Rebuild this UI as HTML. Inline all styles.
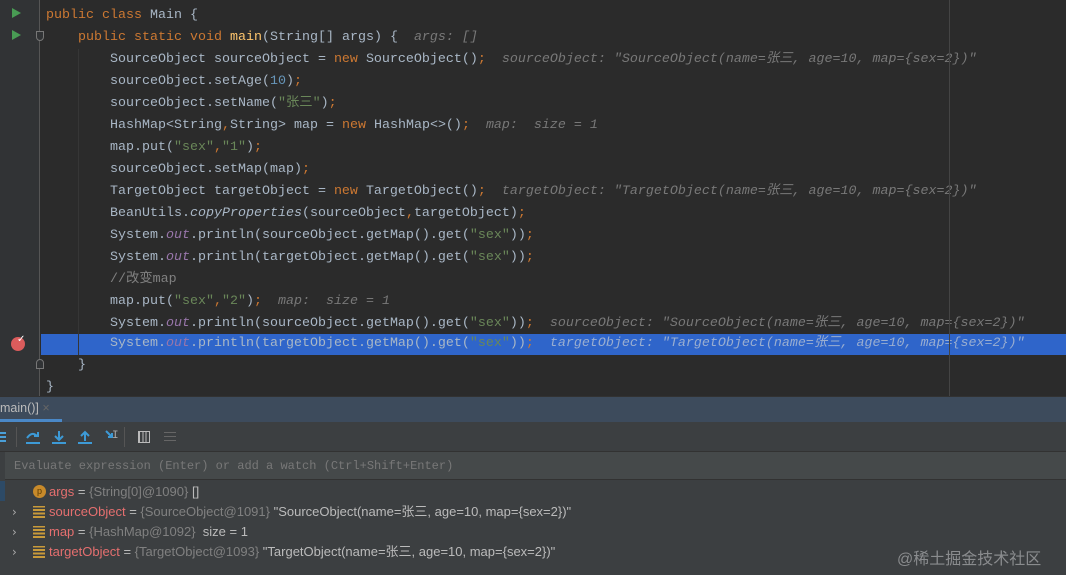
<!DOCTYPE html>
<html><head><meta charset="utf-8"><style>
*{margin:0;padding:0;box-sizing:border-box}
body{width:1066px;height:575px;overflow:hidden;background:#3c3f41;position:relative;font-family:"Liberation Mono","Noto Sans CJK SC",monospace}
#ed{position:absolute;left:0;top:0;width:1066px;height:396px;background:#2b2b2b}
#gut{position:absolute;left:0;top:0;width:40px;height:396px;background:#313335;border-right:1px solid #555}
.l{position:absolute;left:46px;height:22px;line-height:22px;font-size:13.33px;color:#a9b7c6;white-space:pre;margin-top:2px}
.k{color:#cc7832}.s{color:#6a8759}.n{color:#6897bb}.f{color:#9876aa;font-style:italic}.m{color:#ffc66d}.i{font-style:italic}
.h{color:#787878;font-style:italic}
#hl{position:absolute;left:41px;top:334px;width:1025px;height:21px;background:#2f65ca}
.guide{position:absolute;width:1px;background:#363636}
.tri{position:absolute;left:12px;width:0;height:0;border-left:9px solid #499c54;border-top:5.5px solid transparent;border-bottom:5.5px solid transparent}
#tabs{position:absolute;left:0;top:396px;width:1066px;height:26px;background:#3d4b5c;border-top:1px solid #323232}
#tb{position:absolute;left:0;top:422px;width:1066px;height:30px;background:#3c3f41;border-bottom:1px solid #323232}
#ev{position:absolute;left:5px;top:452px;width:1061px;height:28px;background:#45494a;border-bottom:1px solid #323232;font-size:12px;color:#787878;line-height:28px;padding-left:9px}
.v{position:absolute;left:0;height:20px;line-height:20px;font-family:"Liberation Sans","Noto Sans CJK SC",sans-serif;font-size:13px;color:#bbbbbb;white-space:pre}
.v .nm{color:#e56f6f}.v .g{color:#808080}
.ic{position:absolute;left:33px;top:4px;width:12px;height:12px}
.arr{position:absolute;left:12px;top:0;color:#aaa;font-size:12px;font-family:"DejaVu Sans",sans-serif}
</style></head><body>
<div id="ed">
<div id="gut"></div>
<div id="hl"></div>
<div class="guide" style="left:78px;top:49px;height:306px"></div>
<div class="tri" style="top:8px"></div>
<div class="tri" style="top:30px"></div>
<div style="position:absolute;left:36px;top:31px;width:8px;height:10px;border:1px solid #777;border-radius:0 0 4px 4px;background:#313335"></div>
<div style="position:absolute;left:36px;top:359px;width:8px;height:10px;border:1px solid #777;border-radius:4px 4px 0 0;background:#313335"></div>
<div style="position:absolute;left:11px;top:337px;width:14px;height:14px;border-radius:50%;background:#db5c5c"></div>
<div style="position:absolute;left:17px;top:335px;color:#fff;font-size:10px;line-height:10px;font-family:'DejaVu Sans'">✓</div>
<div class="l" style="top:3px"><span class="k">public class </span>Main {</div>
<div class="l" style="top:25px">    <span class="k">public static void </span><span class="m">main</span>(String[] args) {  <span class="h">args: []</span></div>
<div class="l" style="top:47px">        SourceObject sourceObject = <span class="k">new </span>SourceObject()<span class="k">;</span>  <span class="h">sourceObject: "SourceObject(name=张三, age=10, map={sex=2})"</span></div>
<div class="l" style="top:69px">        sourceObject.setAge(<span class="n">10</span>)<span class="k">;</span></div>
<div class="l" style="top:91px">        sourceObject.setName(<span class="s">"张三"</span>)<span class="k">;</span></div>
<div class="l" style="top:113px">        HashMap&lt;String<span class="k">,</span>String&gt; map = <span class="k">new </span>HashMap&lt;&gt;()<span class="k">;</span>  <span class="h">map:  size = 1</span></div>
<div class="l" style="top:135px">        map.put(<span class="s">"sex"</span><span class="k">,</span><span class="s">"1"</span>)<span class="k">;</span></div>
<div class="l" style="top:157px">        sourceObject.setMap(map)<span class="k">;</span></div>
<div class="l" style="top:179px">        TargetObject targetObject = <span class="k">new </span>TargetObject()<span class="k">;</span>  <span class="h">targetObject: "TargetObject(name=张三, age=10, map={sex=2})"</span></div>
<div class="l" style="top:201px">        BeanUtils.<span class="i">copyProperties</span>(sourceObject<span class="k">,</span>targetObject)<span class="k">;</span></div>
<div class="l" style="top:223px">        System.<span class="f">out</span>.println(sourceObject.getMap().get(<span class="s">"sex"</span>))<span class="k">;</span></div>
<div class="l" style="top:245px">        System.<span class="f">out</span>.println(targetObject.getMap().get(<span class="s">"sex"</span>))<span class="k">;</span></div>
<div class="l" style="top:267px">        <span style="color:#808080">//改变map</span></div>
<div class="l" style="top:289px">        map.put(<span class="s">"sex"</span><span class="k">,</span><span class="s">"2"</span>)<span class="k">;</span>  <span class="h">map:  size = 1</span></div>
<div class="l" style="top:311px">        System.<span class="f">out</span>.println(sourceObject.getMap().get(<span class="s">"sex"</span>))<span class="k">;</span>  <span class="h">sourceObject: "SourceObject(name=张三, age=10, map={sex=2})"</span></div>
<div class="l" style="top:331px">        System.<span class="f">out</span>.println(targetObject.getMap().get(<span class="s">"sex"</span>))<span class="k">;</span>  <span class="h" style="color:#9aaed0">targetObject: "TargetObject(name=张三, age=10, map={sex=2})"</span></div>
<div class="l" style="top:353px">    }</div>
<div class="l" style="top:375px">}</div>
<div style="position:absolute;left:949px;top:0;width:1px;height:396px;background:#444"></div>
</div>
<div id="tabs">
<div style="position:absolute;left:0;top:4px;font-family:'Liberation Sans',sans-serif;font-size:12.5px;color:#bbb">main()] <span style="color:#666">×</span></div>
<div style="position:absolute;left:0;top:22px;width:62px;height:3px;background:#4a88c7"></div>
</div>
<div id="tb">
<div style="position:absolute;left:0;top:10px;width:6px;height:2px;background:#4a9fd8;box-shadow:0 4px 0 #4a9fd8,0 8px 0 #4a9fd8"></div>
<div style="position:absolute;left:16px;top:5px;width:1px;height:20px;background:#555"></div>
<svg style="position:absolute;left:24px;top:6px" width="100" height="18" viewBox="0 0 100 18" fill="none" stroke="#3d9ad6" stroke-width="2">
<path d="M3 10 Q8 3 13 8 M10 8 h4 v-4"/><path d="M2 15h14"/>
<path d="M35 3v8 M31 8l4 4 4-4"/><path d="M28 15h14"/>
<path d="M61 13V5 M57 8l4-4 4 4"/><path d="M54 15h14"/>
<path d="M82 3l6 6 M88 5v4h-4"/></svg>
<div style="position:absolute;left:112px;top:8px;color:#aaa;font-size:11px">I</div>
<div style="position:absolute;left:124px;top:5px;width:1px;height:20px;background:#555"></div>
<div style="position:absolute;left:138px;top:9px;width:12px;height:12px;border:1.5px solid #bbb;background:repeating-linear-gradient(90deg,#bbb 0 1px,transparent 1px 3.3px)"></div>
<div style="position:absolute;left:164px;top:10px;width:12px;height:9px;background:repeating-linear-gradient(0deg,#666 0 1px,transparent 1px 4px)"></div>
</div>
<div id="ev">Evaluate expression (Enter) or add a watch (Ctrl+Shift+Enter)</div>
<div style="position:absolute;left:0;top:481px;width:5px;height:20px;background:#2d4a66"></div>
<div class="v" style="top:482px;width:300px"><div class="ic" style="border-radius:50%;background:#c88a2a;width:13px;height:13px;top:3px;font-size:9px;line-height:13px;text-align:center;color:#5a3a00">p</div><span style="position:absolute;left:49px"><span class="nm">args</span> = <span class="g">{String[0]@1090}</span> []</span></div>
<div class="v" style="top:502px;width:700px"><span class="arr">›</span><div class="ic" style="background:repeating-linear-gradient(0deg,#c89a3a 0 2px,transparent 2px 3.5px)"></div><span style="position:absolute;left:49px"><span class="nm">sourceObject</span> = <span class="g">{SourceObject@1091}</span> "SourceObject(name=张三, age=10, map={sex=2})"</span></div>
<div class="v" style="top:522px;width:700px"><span class="arr">›</span><div class="ic" style="background:repeating-linear-gradient(0deg,#c89a3a 0 2px,transparent 2px 3.5px)"></div><span style="position:absolute;left:49px"><span class="nm">map</span> = <span class="g">{HashMap@1092}</span>  size = 1</span></div>
<div class="v" style="top:542px;width:700px"><span class="arr">›</span><div class="ic" style="background:repeating-linear-gradient(0deg,#c89a3a 0 2px,transparent 2px 3.5px)"></div><span style="position:absolute;left:49px"><span class="nm">targetObject</span> = <span class="g">{TargetObject@1093}</span> "TargetObject(name=张三, age=10, map={sex=2})"</span></div>
<div style="position:absolute;left:897px;top:545px;font-family:'Liberation Sans','Noto Sans CJK SC',sans-serif;font-size:16px;color:#8a8c8e;white-space:nowrap">@稀土掘金技术社区</div>
</body></html>
